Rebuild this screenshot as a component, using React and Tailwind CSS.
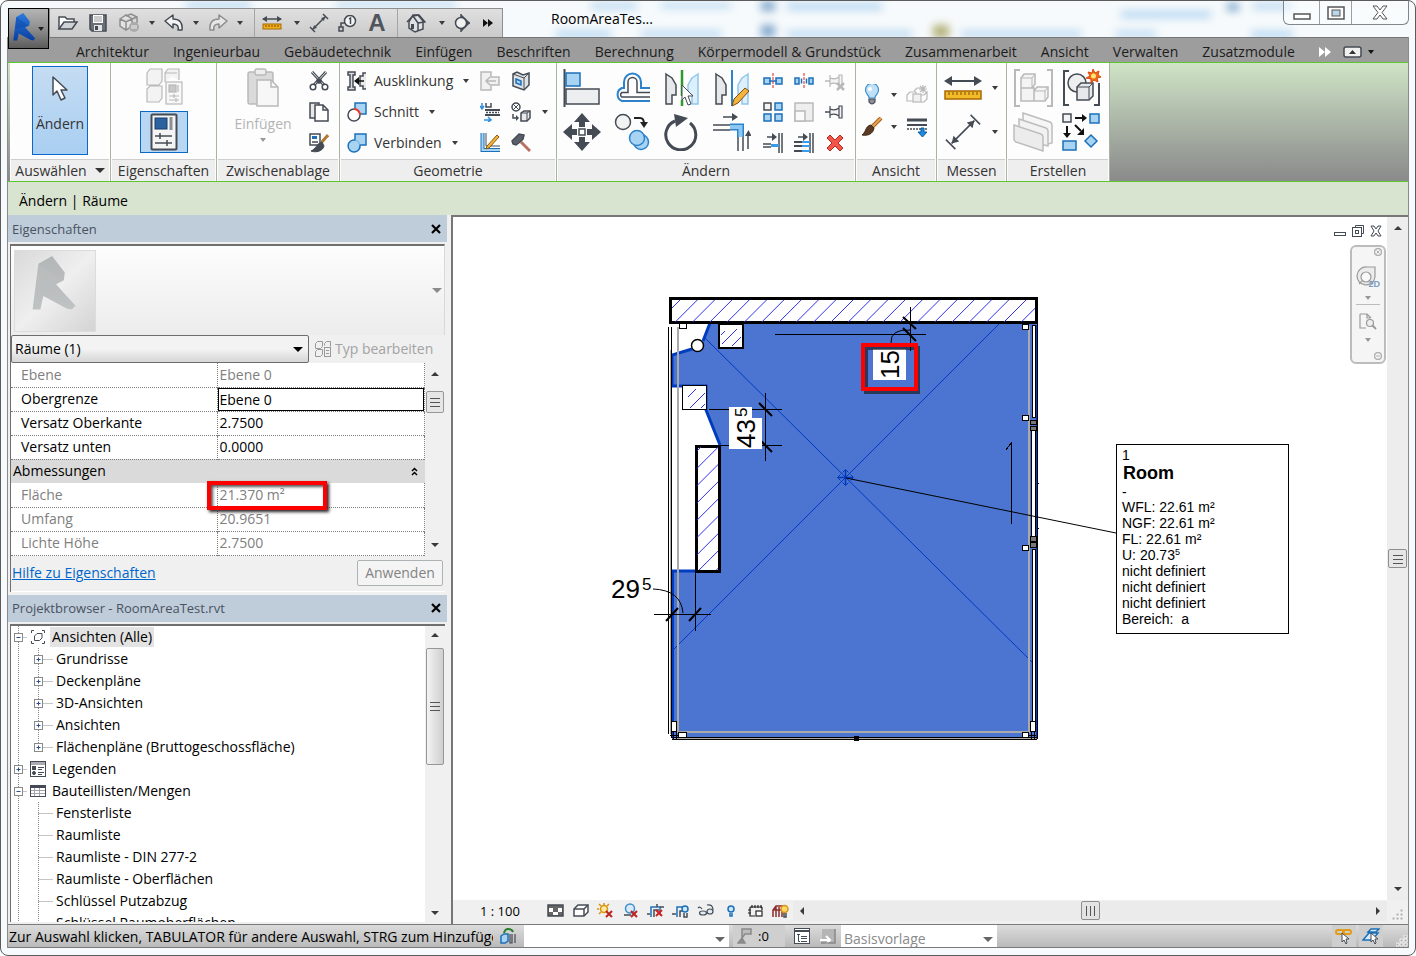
import { useState } from 'react';

const TABS = [
  'Architektur', 'Ingenieurbau', 'Gebäudetechnik', 'Einfügen', 'Beschriften', 'Berechnung',
  'Körpermodell & Grundstück', 'Zusammenarbeit', 'Ansicht', 'Verwalten', 'Zusatzmodule',
];

const PROPERTIES = [
  { name: 'Ebene', value: 'Ebene 0', readOnly: true },
  { name: 'Obergrenze', value: 'Ebene 0', active: true },
  { name: 'Versatz Oberkante', value: '2.7500' },
  { name: 'Versatz unten', value: '0.0000' },
  { group: 'Abmessungen' },
  { name: 'Fläche', value: '21.370 m²', readOnly: true },
  { name: 'Umfang', value: '20.9651', readOnly: true },
  { name: 'Lichte Höhe', value: '2.7500', readOnly: true },
];

const TREE = [
  { level: 0, label: 'Ansichten (Alle)', box: 'minus', icon: 'views', selected: true },
  { level: 1, label: 'Grundrisse', box: 'plus' },
  { level: 1, label: 'Deckenpläne', box: 'plus' },
  { level: 1, label: '3D-Ansichten', box: 'plus' },
  { level: 1, label: 'Ansichten', box: 'plus' },
  { level: 1, label: 'Flächenpläne (Bruttogeschossfläche)', box: 'plus', last: true },
  { level: 0, label: 'Legenden', box: 'plus', icon: 'legend' },
  { level: 0, label: 'Bauteillisten/Mengen', box: 'minus', icon: 'schedule' },
  { level: 1, label: 'Fensterliste' },
  { level: 1, label: 'Raumliste' },
  { level: 1, label: 'Raumliste - DIN 277-2' },
  { level: 1, label: 'Raumliste - Oberflächen' },
  { level: 1, label: 'Schlüssel Putzabzug' },
  { level: 1, label: 'Schlüssel Raumoberflächen' },
];

const D = '#454b54';
const B = '#1c70b8';
const LB = '#a9d3f2';
const G = '#b9b9b9';

const Ico = ({ w = 20, h = 20, c = D, sw = 1.5, children }) => (
  <svg width={w} height={h} viewBox={`0 0 ${w} ${h}`} fill="none" stroke={c} strokeWidth={sw} className="block shrink-0" aria-hidden="true">
    {children}
  </svg>
);

const Caret = ({ c = '#3c3c3c', big }) => (
  <Ico w={big ? 10 : 6} h={big ? 5 : 4}>
    <path d={big ? 'M0 0H10L5 5Z' : 'M0 0H6L3 4Z'} fill={c} stroke="none" />
  </Ico>
);

/* ---------- quick access icons ---------- */
const OpenIcon = () => (
  <Ico w={22} h={16}><path d="M2 14V2h6l2 2h7v3" fill="#fff" /><path d="M2 14 7 7h13l-5 7Z" fill="#cfd3d8" /></Ico>
);
const SaveIcon = () => (
  <Ico w={18} h={18}><path d="M1 1h16v16H3l-2-2Z" fill="#6a6f77" /><rect x="4" y="1" width="10" height="8" fill="#fff" stroke="none" /><path d="M5 3h8M5 5h8M5 7h8" stroke="#999" strokeWidth="1" /><rect x="5" y="11" width="8" height="6" fill="#e4e4e4" stroke="none" /><rect x="6" y="12" width="3" height="4" fill={D} stroke="none" /></Ico>
);
const SyncIcon = () => (
  <Ico w={21} h={20} c="#8e8e8e"><path d="M1 6l6-4 6 4v7l-6 4-6-4ZM1 6l6 3 6-3M7 9v8" fill="#e3e3e3" /><path d="M7 3l5-2 6 3v6M13 6l5-2" /><circle cx="15" cy="14" r="5" fill="#aaa" stroke="none" /><path d="M12 13h6M12 15h6" stroke="#eee" strokeWidth="1" /></Ico>
);
const UndoIcon = () => (
  <Ico w={20} h={18}><path d="M1 7 9 1v4c6 0 10 3 9 11h-4c1-4-1-6-5-6v4Z" fill="#f3f3f3" strokeLinejoin="round" /></Ico>
);
const RedoIcon = () => (
  <Ico w={20} h={18} c="#8c8c8c"><path d="M19 7 11 1v4C5 5 1 8 2 16h4c-1-4 1-6 5-6v4Z" fill="#e6e6e6" strokeLinejoin="round" /></Ico>
);
const RulerIcon = () => (
  <Ico w={20} h={14}><path d="M1 3h18" /><path d="M0 3l5-3v6ZM20 3l-5-3v6Z" fill={D} stroke="none" /><rect x="1" y="8" width="18" height="5" fill="#f0ad1d" stroke="#a86a00" strokeWidth="1" /><path d="M4 9v2M7 9v2M10 9v2M13 9v2M16 9v2" stroke="#7a4d00" strokeWidth="1" /></Ico>
);
const DimIcon = ({ s = 20 }) => (
  <svg width={s} height={s} viewBox="0 0 20 20" fill="none" stroke={D} strokeWidth={s > 30 ? 0.8 : 1.5} className="block shrink-0" aria-hidden="true">
    <path d="M4 16 16 4M14 1l5 5M1 14l5 5" /><path d="M16 4 15 8l-3-3ZM4 16l1-4 3 3Z" fill={D} stroke="none" />
  </svg>
);
const TagIcon = () => (
  <Ico w={19} h={17}><circle cx="12" cy="6" r="5.500" fill="#f5f5f5" /><path d="M11 4l1.500-1v6" /><path d="M7 8H3v4" /><rect x="1" y="12" width="4" height="4" /></Ico>
);
const HouseIcon = () => (
  <Ico w={20} h={19}><path d="M3 8v6l6 4 8-3V7l-5-6H7Z" fill="#dfe1e4" /><path d="M1 8 7 2l5 7M7 2l6-1 6 7-7 1v8" /><rect x="5" y="10" width="3" height="5" fill={D} stroke="none" /></Ico>
);
const SectionIcon = () => (
  <Ico w={18} h={18}><path d="M9 2 16 9 9 16Z" fill={D} /><circle cx="8" cy="9" r="5.500" fill="#f1f1f1" /><path d="M8 0v4M8 14v4M14 9h3" /></Ico>
);

/* ---------- ribbon icons ---------- */
const CursorIcon = () => (
  <Ico w={20} h={27}><path d="M3 2v18l4-4 4 9 4-2-4-8h6Z" fill="#fff" strokeLinejoin="round" /></Ico>
);
const TypesIcon = () => (
  <Ico w={38} h={38} c={G} sw={1.2}><path d="M2 5l3-4h12v12l-3 4H2ZM20 5l3-4h11v11M20 14V5h12M2 21l3-3h12v12l-3 4H2Z" fill="#f3f3f3" /><rect x="21" y="14" width="16" height="22" fill="#f8f8f8" /><rect x="24" y="17" width="7" height="7" fill="#c8c8c8" /><path d="M33 17v7M24 28h10M24 32h10M29 26v4M31 30v4" /></Ico>
);
const PaletteIcon = () => (
  <Ico w={28} h={38} sw={2}><rect x="1.500" y="1.500" width="25" height="35" rx="1" fill="#f4f4f4" /><rect x="5" y="5" width="12" height="11" fill="#2a62a0" stroke="#143c6c" strokeWidth="1" /><path d="M21 4v13" stroke="#8a8f96" strokeWidth="3" /><path d="M5 23h17M5 30h17M10 20v6M17 27v6" strokeWidth="1.500" /></Ico>
);
const PasteIcon = () => (
  <Ico w={34} h={40} c={G}><rect x="2" y="4" width="25" height="32" rx="2" fill="#dadada" /><rect x="9" y="1" width="11" height="6" rx="2" fill="#eee" /><path d="M11 12h14l7 7v19H11Z" fill="#f7f7f7" /><path d="M25 12v7h7" /></Ico>
);
const CutIcon = () => (
  <Ico w={20} h={20}><path d="M3 1 15 14M17 1 5 14" strokeWidth="3" /><path d="M3 1 15 14M17 1 5 14" stroke="#e3e5e8" strokeWidth="1" /><circle cx="4" cy="16" r="2.800" fill="#fff" /><circle cx="16" cy="16" r="2.800" fill="#fff" /><circle cx="10" cy="10" r="2" fill={D} /></Ico>
);
const CopyPagesIcon = () => (
  <Ico w={20} h={20}><path d="M1 1h9v15H1Z" fill="#e8e8e8" /><path d="M6 3h8l5 5v11H6Z" fill="#fff" /><path d="M14 3v5h5" /></Ico>
);
const MatchIcon = () => (
  <Ico w={20} h={20}><rect x="1" y="1" width="10" height="11" fill="#fff" /><rect x="3" y="3" width="5" height="3" fill={B} stroke="none" /><path d="M3 9h6" /><path d="m19 2-7 8" stroke="#b07a34" strokeWidth="3" /><path d="M13 9c-5 1-6 7-11 9 5 2 12 0 13-5Z" fill={D} strokeWidth="1" /></Ico>
);
const CopeIcon = () => (
  <Ico w={20} h={20}><path d="M1 1h7v3H6v12h2v3H1v-3h2V4H1Z" fill="#d8dadd" /><path d="M19 2h-3v3h-3v10h3v3h3" fill="#e9eaec" /><path d="M8 10h9" stroke="#111" /><path d="m12 6-5 4 5 4Z" fill="#111" stroke="none" /></Ico>
);
const CutGeoIcon = () => (
  <Ico w={20} h={20}><path d="M8 1h11v11H8Z" fill={LB} stroke={B} /><circle cx="7" cy="13" r="6" fill="#fff" /><path d="M7 7a6 6 0 0 1 6 6" stroke="#f03c2e" strokeWidth="2" /></Ico>
);
const JoinIcon = () => (
  <Ico w={20} h={20} c={B}><path d="M8 1h11v11h-6a6 6 0 1 1-5-5Z" fill={LB} /><path d="M8 7a6 6 0 0 1 5 5" stroke="#6fb2e6" strokeWidth="1" /></Ico>
);
const WallJoinIcon = () => (
  <Ico w={20} h={20} c={G}><path d="M1 1h10v5h8v8h-8v5H1Z" fill="#f1f1f1" /><path d="M16 10H6M10 6l-4 4 4 4" /></Ico>
);
const SplitFaceIcon = () => (
  <Ico w={20} h={20}><path d="M2 3l4-2 6 3 6-2v12l-5 5-11-4Z" fill="#dfe2e6" /><path d="M2 3l11 4 5-5M13 7v12" strokeWidth="1" /><path d="M5 8l5 2v4l-5-2Z" fill={LB} stroke={B} /></Ico>
);
const BeamIcon = () => (
  <Ico w={20} h={20}><path d="M2 1v6M0 4l2 3 2-3M4 18h7M8 15l3 3-3 2" stroke="#2f90e0" /><path d="M6 1v4h5V1" /><path d="M5 8h15M5 13h15" strokeWidth="2" /><path d="M6 10.500h13" strokeDasharray="2 1" /></Ico>
);
const DemoIcon = () => (
  <Ico w={20} h={20}><circle cx="5" cy="5" r="4" /><path d="M2 2l6 6M8 2 2 8" strokeWidth="1" /><path d="M2 12v4h4" /><path d="M5 13l3 3-3 3Z" fill={D} stroke="none" /><path d="M10 11l3-2h6v7l-3 3h-6Z" fill="#e8eaed" /><path d="M10 11h6l3-2M16 11v8" strokeWidth="1" /></Ico>
);
const PencilWallIcon = () => (
  <Ico w={20} h={20}><path d="M2.500 0v17H20" strokeWidth="4" stroke={B} /><path d="M2.500 0v17H20" strokeWidth="2" stroke="#a9d3f2" /><path d="M6 0v13h14" stroke={D} strokeWidth="1" /><path d="M7 13 17 2l2 2L9 15l-3 1Z" fill="#f3b33d" stroke="#8a5a0e" strokeWidth="1" /></Ico>
);
const HammerIcon = () => (
  <Ico w={20} h={20}><path d="m10 9 9 9" stroke="#b96f61" strokeWidth="3" /><path d="M1 8 8 1l5 1-1 4-3 3-4 3-3-1Z" fill="#5c6169" /></Ico>
);
const AlignIcon = () => (
  <Ico w={38} h={38}><path d="M1.500 0v38" strokeWidth="2" /><rect x="3" y="4" width="14" height="13" fill={LB} stroke={B} /><rect x="3" y="20" width="33" height="15" fill="#eceef0" /></Ico>
);
const OffsetIcon = () => (
  <Ico w={38} h={34}><path d="M37 17H28V11a8.500 8.500 0 0 0-17 0v6H9a7 7 0 0 0 0 13H37" stroke="#2c83cc" strokeWidth="2" /><path d="M37 21.500H24V11a4.500 4.500 0 0 0-9 0v10.500H9a2.500 2.500 0 0 0 0 4.500H37" /></Ico>
);
const MirrorHalves = () => (
  <>
    <path d="M2 5l6 4 4 7v10H8v9H2Z" fill="#e6e8ea" />
    <path d="M34 5l-6 4-4 7v10h4v9h6Z" fill="#dceffb" stroke="#8fc6ea" />
  </>
);
const MirrorPickIcon = () => (
  <Ico w={36} h={38}><MirrorHalves /><path d="M18 1v36" stroke="#2e9a2b" strokeWidth="2.500" strokeDasharray="26 4" /><path d="M18 16v15l3-3 3 8 3-1-3-8h5Z" fill="#fff" strokeWidth="1" /></Ico>
);
const MirrorDrawIcon = () => (
  <Ico w={36} h={38}><MirrorHalves /><path d="M18 1v36" stroke="#2c83cc" strokeWidth="2" /><path d="m18 37 2-7 11-11 4 3-11 12Z" fill="#f3b33d" stroke="#7a4e10" strokeWidth="1" /></Ico>
);
const MoveIcon = () => (
  <Ico w={38} h={38}><path d="M19 0l8 9h-5v5h-6V9h-5ZM19 38l-8-9h5v-5h6v5h5ZM0 19l9-8v5h5v6H9v5ZM38 19l-9 8v-5h-5v-6h5v-5Z" fill={D} stroke="none" /><rect x="16" y="16" width="6" height="6" fill="#fff" /></Ico>
);
const CopyIcon = () => (
  <Ico w={36} h={38}><circle cx="9" cy="9" r="7.500" fill="#f2f2f2" /><path d="M20 5h6q4 0 4 6" stroke="#222" strokeWidth="2" /><path d="M26 9h8l-4 6Z" fill="#222" stroke="none" /><circle cx="27" cy="29" r="7.500" fill={LB} stroke="#2c83cc" /><circle cx="23" cy="25" r="7.500" fill={LB} stroke="#2c83cc" /></Ico>
);
const RotateIcon = () => (
  <Ico w={36} h={38}><path d="M11 8a15 15 0 1 0 15 2" strokeWidth="3" /><path d="M10 1l14 4-12 9Z" fill={D} stroke="none" /></Ico>
);
const TrimIcon = () => (
  <Ico w={38} h={38}><path d="M10 4h12M0 12h17M0 17h17M25 24v14M30 24v14" /><path d="M19 0l6 4-6 4ZM32 23l3.500-6 3 6Z" fill={D} stroke="none" /><path d="M17 14h10.500v10" stroke="#2c83cc" strokeWidth="7" /><path d="M17 14h10.500v10" stroke="#8cc8f2" strokeWidth="4" /><path d="M35 36V22" /></Ico>
);
const SplitIcon = ({ gap }) => (
  <Ico w={20} h={16} c={B}><rect x="1" y="5" width={gap ? 4 : 6} height="6" fill={LB} /><rect x={gap ? 15 : 13} y="5" width={gap ? 4 : 6} height="6" fill={LB} />{gap ? <path d="M7.500 5.500v5M12.500 5.500v5" /> : <path d="M6 8h8" />}<path d="M10 0v16" stroke="#d22" strokeDasharray="3 1" strokeWidth="1" /></Ico>
);
const ArrayIcon = () => (
  <Ico w={20} h={20} c={B}><rect x="1" y="1" width="7" height="7" fill="#f3f3f3" stroke={D} /><rect x="12" y="1" width="7" height="7" fill={LB} /><rect x="1" y="12" width="7" height="7" fill={LB} /><rect x="12" y="12" width="7" height="7" fill={LB} /></Ico>
);
const ScaleIcon = () => (
  <Ico w={20} h={20} c={G}><rect x="1" y="1" width="18" height="18" fill="#eee" /><rect x="1" y="9" width="10" height="10" fill="#fafafa" /></Ico>
);
const PinIcon = ({ c = D, off }) => (
  <Ico w={20} h={20} c={c}><path d="M0 10h5" /><path d="M5 4v12M5 7q5 2 9-1v8q-4-3-9-1M14 4h3v12h-3Z" fill="#f4f4f4" strokeWidth="1.200" />{off && <path d="m12 12 7 7M19 12l-7 7" strokeWidth="2.500" />}</Ico>
);
const ExtendIcon = ({ multi }) => (
  <Ico w={20} h={20}><path d="M4 4h7" /><path d="M9 0l5 4-5 4Z" fill={D} stroke="none" /><path d="M16 0v20M19 0v20" />{multi ? <><path d="M0 9h8M0 13h8M0 18h8" strokeWidth="2" /><path d="M8 9h8M8 13h8M8 18h8" stroke="#3c9be6" strokeWidth="2" /></> : <><path d="M0 11h8M0 14h8" /><path d="M8 12.500h8" stroke="#3c9be6" strokeWidth="3" /></>}</Ico>
);
const DeleteIcon = () => (
  <Ico w={18} h={18}><path d="M1 4l3-3 5 5 5-5 3 3-5 5 5 5-3 3-5-5-5 5-3-3 5-5Z" fill="#f0564a" stroke="#b8281e" strokeWidth="1" /></Ico>
);
const BulbIcon = () => (
  <Ico w={16} h={22} c="#3f8fcc" sw={1.2}><path d="M5 14q0-2-2-4a6.500 6.500 0 1 1 10 0q-2 2-2 4Z" fill="#bfe0f7" /><circle cx="6" cy="5" r="2" fill="#fff" stroke="none" /><path d="M5 15h6v3q-3 4-6 0Z" fill="#8b8f95" stroke={D} /></Ico>
);
const BoxesIcon = () => (
  <Ico w={22} h={20} c={G} sw={1.2}><path d="M1 10l3-3h6v9H1ZM8 6l3-3h5M13 10h5l3-3v7l-3 3h-3" /><rect x="7" y="9" width="8" height="8" fill="#f1f1f1" /><path d="M17 0v8M13 4h8M14 1l6 6M20 1l-6 6" /></Ico>
);
const BrushIcon = () => (
  <Ico w={21} h={20}><path d="M19 1 9 11" stroke="#a25e1d" strokeWidth="4" /><path d="M19 1 9 11" stroke="#eba550" strokeWidth="2" /><path d="M9 8c-6 1-4 6-9 10 6 1 11-1 12-7Z" fill="#5a3a22" stroke="#3d2817" strokeWidth="1" /></Ico>
);
const LineworkIcon = () => (
  <Ico w={20} h={20}><path d="M0 3h20" strokeWidth="3" /><path d="M0 8h20" strokeWidth="2" /><path d="M0 12h20" strokeDasharray="2 1" /><path d="M14 11h3v4h3l-4.500 5-4.500-5h3Z" fill="#1d8ae0" stroke="#0d5ca0" strokeWidth="1" /></Ico>
);
const MeasureIcon = () => (
  <Ico w={38} h={24}><path d="M4 5h30" strokeWidth="2" /><path d="M0 5l8-5v10ZM38 5l-8-5v10Z" fill={D} stroke="none" /><rect x="1" y="15" width="36" height="8" fill="#f3bb2a" stroke="#a86a00" /><path d="M5 16v3M9 16v3M13 16v3M17 16v3M21 16v3M25 16v3M29 16v3M33 16v3" stroke="#7a4d00" strokeWidth="1" /></Ico>
);
const GroupIcon = () => (
  <Ico w={39} h={38} c={G}><path d="M6 1H1v36h5M33 1h5v36h-5" strokeWidth="2" /><path d="M7 9l3-4h11v10l-3 4H7ZM7 19h13v13H7ZM20 22l3-4h11v10l-3 4H20Z" fill="#f4f4f4" /><path d="M7 9h11v10M18 9l3-4M20 22h11v10M31 22l3-4" strokeWidth="1" /></Ico>
);
const CreateGroupIcon = () => (
  <Ico w={39} h={38}><path d="M7 2H2v34h5M32 36h5V14" strokeWidth="2" /><circle cx="15" cy="14" r="9" fill="#eceef0" /><path d="M15 18l4-4h12v13l-4 4H15Z" fill="#e6e8eb" /><path d="M15 18h12v12M27 18l4-4" strokeWidth="1" /><path d="M31 0l2 4 4-2-1 4 3 2-4 1 1 4-4-2-3 3v-4l-5-1 4-2-2-4 4 1Z" fill="#f26a1b" stroke="#d84708" strokeWidth="1" /><circle cx="31.500" cy="7" r="2.500" fill="#ffe873" stroke="none" /></Ico>
);
const AssemblyIcon = () => (
  <Ico w={40} h={40} c="#bdbdbd"><path d="M10 1l27 9q2 1 2 3v18l-4 1L10 20Z" fill="#f6f6f6" /><path d="M6 7l27 9q2 1 2 3v15L6 26Z" fill="#f2f2f2" /><path d="M1 13l27 9q2 1 2 3v14L3 30q-2-1-2-3Z" fill="#ececec" /></Ico>
);
const SimilarIcon = () => (
  <Ico w={39} h={38}><rect x="1" y="1" width="8" height="8" fill="#f3f3f3" /><rect x="28" y="1" width="9" height="9" fill={LB} stroke={B} /><rect x="1" y="28" width="13" height="9" fill={LB} stroke={B} /><path d="m29 22 6 6-6 6-6-6Z" fill={LB} stroke={B} /><path d="M13 5h9M5 13v8M13 12l6 6" stroke="#111" strokeWidth="2" /><path d="M20 1l5 4-5 4ZM1 20l4 5 4-5ZM22 15v7h-7Z" fill="#111" stroke="none" /></Ico>
);

/* ---------- view and status bar icons ---------- */
const ViewIcons = [
  ['Detaillierungsgrad', <Ico w={17} h={13}><rect x="1" y="1" width="15" height="11" fill="#666" /><path d="M2 4h4v4H2ZM11 4h4v4h-4ZM6 8h5v3H6Z" fill="#fff" stroke="none" /></Ico>],
  ['Bildstil', <Ico w={16} h={13}><path d="M1 5l4-4h10v7l-4 4H1Z" fill="#fff" /><path d="M1 5h10v7M11 5l4-4" /></Ico>],
  ['Sonnenbahn', <Ico w={17} h={15}><circle cx="7" cy="6" r="3.500" fill="#ffe9a0" stroke="#d89415" /><path d="M7 0v2M0 6h2M2 1l2 2M12 1l-2 2M2 11l2-2" stroke="#d89415" /><path d="m9 8 6 6M15 8l-6 6" stroke="#b22" strokeWidth="2" /></Ico>],
  ['Schatten', <Ico w={16} h={15}><circle cx="7" cy="5.500" r="4.500" fill="#d6eafa" stroke="#3f8fcc" /><path d="M1 12h7" /><path d="m8 8 6 6M14 8l-6 6" stroke="#b22" strokeWidth="2" /></Ico>],
  ['Ansicht zuschneiden', <Ico w={17} h={14}><path d="M4 13V3h9v8" stroke={B} strokeWidth="1.500" /><path d="M0 10h3M7 13V6h5M13 3h4M10 0v3" stroke={D} /><path d="m9 6 6 6M15 6l-6 6" stroke="#c22" strokeWidth="2" /></Ico>],
  ['Zuschneidebereich', <Ico w={17} h={14}><path d="M5 13V3h7" stroke={B} /><path d="M0 10h4M8 13V7h3" stroke={D} /><circle cx="13" cy="5" r="3" fill="#cde6f8" stroke={B} /><path d="M12 9v4h3V9" /></Ico>],
  ['Temporär ausblenden', <Ico w={18} h={13} sw={1.2}><path d="M1 4q2-2 4 1M10 1q6-1 6 5" /><ellipse cx="6" cy="9" rx="3.500" ry="2" fill="#dfeaf2" /><ellipse cx="13" cy="7.500" rx="3" ry="2.500" fill="#dfeaf2" /></Ico>],
  ['Verdeckte Elemente', <Ico w={8} h={12} c={B}><circle cx="4" cy="4" r="3" fill="#cde6f8" /><path d="M3 8v3h2V8" /></Ico>],
  ['Eigenschaften der Ansicht', <Ico w={16} h={14}><path d="M2 3h12M2 3v9h5M14 3v3M4 1v3M7 1v3M10 1v3M13 1v3M0 6h3M0 9h3" stroke="#222" strokeWidth="1.200" /><rect x="8" y="7" width="6" height="5" fill="#fff" stroke="#222" strokeWidth="1.200" /></Ico>],
  ['Berechnungsmodell', <Ico w={17} h={14}><path d="M1 13V6l3-4h8M1 6h9M4 3v10M7 3v10M10 3v10" stroke="#8b2d2d" /><circle cx="12.500" cy="5" r="3.500" fill="#ffd768" stroke="#d89415" /><path d="M12 9v4h2V9" /></Ico>],
];

const RLogo = ({ id, a, b }) => (
  <g>
    <defs>
      <linearGradient id={id} x1="0" y1="0" x2="0" y2="1"><stop offset="0" stopColor={a} /><stop offset="1" stopColor={b} /></linearGradient>
    </defs>
    <path d="M6 8 20 0l13 17-1 8-8 4 20 22-4 4-5-1L11 41 8 55H0Z" fill={`url(#${id})`} />
    <path d="M6 8 4 32l12-3 14-4" fill={b} opacity="0.350" />
  </g>
);

const SplitCaret = ({ label }) => (
  <button type="button" aria-label={label} className="flex h-6 w-4 items-center justify-center"><Caret /></button>
);
const Tool = ({ label, className = '', children }) => (
  <button type="button" aria-label={label} title={label} className={`flex items-center justify-center ${className}`}>{children}</button>
);

function TitleBar() {
  return (
    <header className="relative flex h-9 shrink-0 items-start pl-px">
      <div className="flex h-9 pt-[7px]">
        <button type="button" aria-label="Anwendungsmenü" className="relative z-10 flex h-[41px] w-[41px] shrink-0 items-start justify-between border border-black bg-linear-to-b from-[#b5b5b5] via-[#8f8f8f] to-[#5c5c5c] px-1 pt-1">
          <svg width="23" height="28" viewBox="0 0 45 56" aria-hidden="true"><RLogo id="r-blue" a="#2b7be0" b="#0a3fa0" /></svg>
          <span className="pt-3.5"><Caret c="#222" /></span>
        </button>
        <div className="flex h-[30px] items-center border border-[#8e8e8e] bg-linear-to-b from-[#e0e0e0] to-[#cacaca] pl-1">
          <Tool label="Öffnen" className="w-7"><OpenIcon /></Tool>
          <Tool label="Speichern" className="w-8"><SaveIcon /></Tool>
          <Tool label="Synchronisieren" className="w-[30px]"><SyncIcon /></Tool>
          <SplitCaret label="Synchronisieren Optionen" />
          <Tool label="Rückgängig" className="w-7"><UndoIcon /></Tool>
          <SplitCaret label="Rückgängig Liste" />
          <Tool label="Wiederherstellen" className="w-7"><RedoIcon /></Tool>
          <SplitCaret label="Wiederherstellen Liste" />
          <span className="ml-1.5 h-full w-px bg-[#a5a5a5]" />
          <Tool label="Messen" className="w-[34px]"><RulerIcon /></Tool>
          <SplitCaret label="Messen Optionen" />
          <Tool label="Ausgerichtete Bemaßung" className="w-7"><DimIcon /></Tool>
          <Tool label="Nach Kategorie beschriften" className="w-7"><TagIcon /></Tool>
          <button type="button" className="w-8 font-['Liberation_Sans',sans-serif] text-2xl/6 font-bold text-[#50555d]">A</button>
          <span className="ml-1 h-full w-px bg-[#a5a5a5]" />
          <Tool label="3D-Ansicht" className="w-9"><HouseIcon /></Tool>
          <SplitCaret label="3D-Ansicht Optionen" />
          <Tool label="Schnitt" className="w-6"><SectionIcon /></Tool>
          <Tool label="Mehr" className="w-7"><Ico w={10} h={8}><path d="M0 0l5 4-5 4ZM5 0l5 4-5 4Z" fill="#111" stroke="none" /></Ico></Tool>
        </div>
      </div>
      <h1 className="pt-2 pl-12 text-sm/5 text-black">RoomAreaTes...</h1>
      <div className="ml-auto flex h-6 rounded-b-md border border-t-0 border-[#7f868c] bg-white/40">
        <Tool label="Minimieren" className="w-9 border-r border-[#9aa0a6]"><Ico w={18} h={16}><rect x="1" y="9" width="16" height="5" fill="#fff" stroke="#555" /></Ico></Tool>
        <Tool label="Maximieren" className="w-8 border-r border-[#9aa0a6]"><Ico w={18} h={16}><rect x="1" y="2" width="16" height="12" fill="#fff" stroke="#555" /><rect x="5" y="5" width="8" height="6" fill="#bcd6ea" stroke="#555" strokeWidth="1" /></Ico></Tool>
        <Tool label="Schließen" className="w-14"><Ico w={16} h={15}><path d="M1 1h4l3 4 3-4h4l-5 6.500 5 6.500h-4l-3-4-3 4H1l5-6.500Z" fill="#fff" stroke="#555" strokeWidth="1" /></Ico></Tool>
      </div>
    </header>
  );
}

function RibbonPanel({ title, caret, className, children }) {
  return (
    <section className={`flex shrink-0 flex-col border-r border-[#a9b5a3] bg-[#fdfdfd] ${className}`}>
      <div className="flex h-24 items-start">{children}</div>
      <h2 className="mx-px flex h-[22px] items-center justify-center gap-2 border-t border-[#cfcfcf] bg-[#eeeeee] text-sm/5 text-[#333]">
        {title}{caret && <Caret big c="#333" />}
      </h2>
    </section>
  );
}

const GeoRow = ({ icon, label }) => (
  <button type="button" className="flex h-[31px] items-center text-sm/5 text-[#333]">
    {icon}<span className="pl-[7px]">{label}</span><span className="pl-2.5"><Caret /></span>
  </button>
);

function Ribbon() {
  return (
    <div className="flex h-[120px] shrink-0 border-y border-[#5cc72e] bg-linear-to-b from-[#cfe4c6] to-[#8a8a8a] pl-0.5">
      <RibbonPanel title="Auswählen" caret className="w-[101px]">
        <button type="button" className="mt-[3px] ml-[22px] flex h-[89px] w-14 flex-col items-center border border-[#0a68cb] bg-linear-to-b from-[#c5dcf2] to-[#a9cff2] pt-2 text-sm/5 text-[#333]">
          <CursorIcon /><span className="pt-3">Ändern</span>
        </button>
      </RibbonPanel>
      <RibbonPanel title="Eigenschaften" className="w-[106px]">
        <div className="flex w-full flex-col items-center gap-1 pt-1">
          <Tool label="Typeneigenschaften" className="h-10"><TypesIcon /></Tool>
          <Tool label="Eigenschaften" className="h-[42px] w-12 border border-[#0a68cb] bg-[#b9d7f3]"><PaletteIcon /></Tool>
        </div>
      </RibbonPanel>
      <RibbonPanel title="Zwischenablage" className="w-[123px]">
        <button type="button" disabled className="flex w-[92px] flex-col items-center pt-[5px] text-sm/5 text-[#b4b4b4]">
          <PasteIcon /><span className="pt-1.5 pb-1">Einfügen</span><Caret c="#999" />
        </button>
        <div className="grid auto-rows-[31px] pt-0.5">
          <Tool label="Ausschneiden"><CutIcon /></Tool>
          <Tool label="Kopieren"><CopyPagesIcon /></Tool>
          <Tool label="Typ anpassen"><MatchIcon /></Tool>
        </div>
      </RibbonPanel>
      <RibbonPanel title="Geometrie" className="w-[217px]">
        <div className="flex w-[140px] flex-col items-start pt-0.5 pl-[7px]">
          <GeoRow icon={<CopeIcon />} label="Ausklinkung" />
          <GeoRow icon={<CutGeoIcon />} label="Schnitt" />
          <GeoRow icon={<JoinIcon />} label="Verbinden" />
        </div>
        <div className="grid auto-rows-[31px] grid-cols-[20px_20px_6px] gap-x-[11px] pt-0.5">
          <Tool label="Dachverbindung"><WallJoinIcon /></Tool>
          <Tool label="Fläche trennen"><SplitFaceIcon /></Tool>
          <span />
          <Tool label="Trägerverbindungen"><BeamIcon /></Tool>
          <Tool label="Abbruch"><DemoIcon /></Tool>
          <Tool label="Mehr Geometrie"><Caret /></Tool>
          <Tool label="Wandverbindungen"><PencilWallIcon /></Tool>
          <Tool label="Hammer"><HammerIcon /></Tool>
        </div>
      </RibbonPanel>
      <RibbonPanel title="Ändern" className="w-[299px]">
        <div className="grid auto-rows-[44px] grid-cols-[50px_50px_50px_50px] pt-[3px]">
          <Tool label="Ausrichten"><AlignIcon /></Tool>
          <Tool label="Versatz"><OffsetIcon /></Tool>
          <Tool label="Spiegeln - Achse wählen"><MirrorPickIcon /></Tool>
          <Tool label="Spiegeln - Achse zeichnen"><MirrorDrawIcon /></Tool>
          <Tool label="Verschieben"><MoveIcon /></Tool>
          <Tool label="Kopieren"><CopyIcon /></Tool>
          <Tool label="Drehen"><RotateIcon /></Tool>
          <Tool label="Stutzen"><TrimIcon /></Tool>
        </div>
        <div className="grid auto-rows-[31px] grid-cols-[31px_31px_31px] pt-0.5">
          <Tool label="Element teilen"><SplitIcon /></Tool>
          <Tool label="Mit Lücke teilen"><SplitIcon gap /></Tool>
          <Tool label="Lösen"><PinIcon c={G} off /></Tool>
          <Tool label="Reihe"><ArrayIcon /></Tool>
          <Tool label="Maßstab"><ScaleIcon /></Tool>
          <Tool label="Fixieren"><PinIcon /></Tool>
          <Tool label="Dehnen"><ExtendIcon /></Tool>
          <Tool label="Mehrere dehnen"><ExtendIcon multi /></Tool>
          <Tool label="Löschen"><DeleteIcon /></Tool>
        </div>
      </RibbonPanel>
      <RibbonPanel title="Ansicht" className="w-[81px]">
        <div className="grid auto-rows-[32px] grid-cols-[32px_12px_34px] pt-4">
          <Tool label="Ausblenden"><BulbIcon /></Tool>
          <Tool label="Ausblenden Optionen"><Caret /></Tool>
          <Tool label="Grafik überschreiben"><BoxesIcon /></Tool>
          <Tool label="Pinsel"><BrushIcon /></Tool>
          <Tool label="Pinsel Optionen"><Caret /></Tool>
          <Tool label="Linienbearbeitung"><LineworkIcon /></Tool>
        </div>
      </RibbonPanel>
      <RibbonPanel title="Messen" className="w-[70px]">
        <div className="grid auto-rows-[44px] grid-cols-[52px_12px] pt-[3px]">
          <Tool label="Zwischen zwei Referenzen messen"><MeasureIcon /></Tool>
          <Tool label="Messen Optionen"><Caret /></Tool>
          <Tool label="Bemaßung"><DimIcon s={38} /></Tool>
          <Tool label="Bemaßung Optionen"><Caret /></Tool>
        </div>
      </RibbonPanel>
      <RibbonPanel title="Erstellen" className="w-[103px]">
        <div className="grid auto-rows-[44px] grid-cols-[48px_48px] pt-[3px] pl-0.5">
          <Tool label="Baugruppe"><GroupIcon /></Tool>
          <Tool label="Gruppe erstellen"><CreateGroupIcon /></Tool>
          <Tool label="Teilelemente"><AssemblyIcon /></Tool>
          <Tool label="Ähnliches erstellen"><SimilarIcon /></Tool>
        </div>
      </RibbonPanel>
    </div>
  );
}

const PaletteHeader = ({ title }) => (
  <div className="flex h-[27px] shrink-0 items-center justify-between bg-[#bfcddb] pr-1.5 pl-1">
    <h2 className="text-[13px]/5 text-[#4a5260]">{title}</h2>
    <button type="button" aria-label={`${title} schließen`}><Ico w={10} h={10} c="#000" sw={2.2}><path d="m1 1 8 8M9 1 1 9" /></Ico></button>
  </div>
);

const ScrollArrow = ({ dir }) => {
  const d = { up: 'M0 4 4 0l4 4Z', down: 'M0 0h8L4 4Z', left: 'M4 0v8L0 4Z', right: 'M0 0v8l4-4Z' }[dir];
  const vertical = dir === 'up' || dir === 'down';
  return (
    <button type="button" aria-label={`Bildlauf ${dir}`} className="flex size-[18px] shrink-0 items-center justify-center">
      <Ico w={vertical ? 8 : 4} h={vertical ? 4 : 8}><path d={d} fill="#3a3a3a" stroke="none" /></Ico>
    </button>
  );
};
const Grip = ({ flat }) => (
  <Ico w={10} h={10} c="#555" sw={1}><path d={flat ? 'M1.500 0v10M5.500 0v10M9.500 0v10' : 'M0 1.500h10M0 5.500h10M0 9.500h10'} /></Ico>
);

function Properties() {
  const [bound, setBound] = useState('Ebene 0');
  return (
    <section>
      <PaletteHeader title="Eigenschaften" />
      <div className="mx-0.5 mt-0.5 border-l border-[#6f6f6f]">
        <div className="flex h-[91px] items-center justify-between border-t-2 border-r border-t-[#6f6f6f] border-r-[#d9d9d9] bg-linear-to-b from-[#fdfdfd] to-[#ececec] pr-0.5 pl-[3px]">
          <svg width="82" height="82" viewBox="0 0 82 82" className="border border-[#dcdcdc] bg-linear-to-br from-[#d9d9d9] via-[#efefef] to-[#d4d4d4]" aria-hidden="true">
            <g transform="translate(18 5)"><RLogo id="r-gray" a="#b3b6b6" b="#c0c3c3" /></g>
          </svg>
          <button type="button" aria-label="Typenauswahl"><Caret big c="#8a8a8a" /></button>
        </div>
        <div className="flex h-7 items-center">
          <div className="relative flex w-[298px]">
            <select aria-label="Kategorie" className="h-7 w-full appearance-none rounded-xs border border-[#6d6d6d] bg-linear-to-b from-[#f3f3f3] from-50% to-[#d6d6d6] pl-[3px] text-sm text-black">
              <option>Räume (1)</option>
            </select>
            <span className="pointer-events-none absolute top-3 right-1.5"><Caret big c="#000" /></span>
          </div>
          <button type="button" disabled className="flex items-center gap-1 pl-1.5 text-sm/5 text-[#a3a3a3]">
            <Ico w={16} h={16} c="#999" sw={1}><path d="M.5 2.500 2.500.5h5v5l-2 2h-5ZM9.500 4.500v-2l2-2h4v5M.5 10.500l2-2h5v5l-2 2h-5Z" /><rect x="9.500" y="6.500" width="6" height="9" /><path d="M11 9.500h3M11 12.500h3" /></Ico>
            Typ bearbeiten
          </button>
        </div>
        <div className="relative flex">
          <table className="w-[414px] table-fixed border-collapse bg-white text-sm/5">
            <tbody>
              {PROPERTIES.map(p => p.group ? (
                <tr key={p.group} className="h-6 bg-[#dadada]">
                  <th colSpan={2} scope="rowgroup" className="px-0.5 font-normal">
                    <span className="flex items-center justify-between pr-1 text-black">
                      {p.group}
                      <Ico w={8} h={9} c="#000"><path d="m1 4 2.500-2.500L6 4M1 8l2.500-2.500L6 8" /></Ico>
                    </span>
                  </th>
                </tr>
              ) : (
                <tr key={p.name} className={`h-6 border-b border-dotted border-[#7d7d7d] ${p.readOnly ? 'text-[#808080]' : 'text-black'}`}>
                  <th scope="row" className="w-[206px] border-r border-dotted border-[#7d7d7d] pl-2.5 text-left font-normal">{p.name}</th>
                  <td className="border-r border-dotted border-[#7d7d7d] p-0">
                    {p.active ? (
                      <input aria-label={p.name} value={bound} onChange={e => setBound(e.target.value)} className="block h-[23px] w-full border border-black pl-px outline-none" />
                    ) : <span className="pl-0.5">{p.value}</span>}
                  </td>
                </tr>
              ))}
            </tbody>
          </table>
          <div className="flex flex-1 flex-col items-center justify-between bg-[#f0f0f0] py-0.5">
            <div>
              <ScrollArrow dir="up" />
              <div className="mt-2 flex h-[22px] w-[18px] items-center justify-center rounded-xs border border-[#979797] bg-[#e6e6e6]"><Grip /></div>
            </div>
            <ScrollArrow dir="down" />
          </div>
          <div className="pointer-events-none absolute top-[118px] left-[196px] h-[29px] w-[120px] border-4 border-[#f00] shadow-[2px_2px_3px_#222,inset_2px_2px_3px_#555]" />
        </div>
        <div className="flex h-9 items-center justify-between border-b border-white pr-0.5 pl-px text-sm/5">
          <a href="#hilfe" className="text-[#0066cc] underline">Hilfe zu Eigenschaften</a>
          <button type="button" disabled className="h-[26px] w-[86px] rounded-xs border border-[#adb2b5] bg-[#f4f4f4] text-[#838383]">Anwenden</button>
        </div>
      </div>
    </section>
  );
}

const NodeIcon = ({ name }) => {
  if (name === 'views') return <Ico w={16} h={16} sw={1}><path d="M4 1.500H1.500V4M12 1.500h2.500V4M1.500 12v2.500H4M14.500 12v2.500H12" /><path d="M4.500 7 7 4.500h5V9l-2.500 2.500h-5Z" /></Ico>;
  if (name === 'legend') return <Ico w={16} h={16} sw={1}><rect x=".5" y=".5" width="15" height="15" fill="#fff" /><rect x="1" y="1" width="14" height="3" fill="#a9adb3" stroke="none" /><rect x="2.500" y="5.500" width="3" height="3" fill={D} /><circle cx="4" cy="12" r="1.500" fill={D} /><path d="M8 6.500h6M8 8.500h4M8 11.500h6M8 13.500h4" /></Ico>;
  return <Ico w={16} h={14} sw={1}><rect x=".5" y="1.500" width="15" height="11" fill="#fff" /><path d="M0 3h16" strokeWidth="2" /><path d="M1 6.500h14M1 9.500h14M4.500 4v8M9.500 4v8" stroke="#a1a5ab" /></Ico>;
};

const TreeRow = ({ node }) => {
  const x = node.level ? 27.5 : 7.5;
  const w = node.level ? 45 : 19;
  return (
    <li className="flex h-[22px] items-center">
      <Ico w={w} h={22} c="#8a8a8a" sw={1}>
        <path d="M7.500 0v22" strokeDasharray="1 1" />
        {node.level === 1 && <path d={node.last ? 'M27.500 0v11' : 'M27.500 0v22'} strokeDasharray="1 1" />}
        <path d={`M${x} 11.500H${w - 3}`} strokeDasharray="1 1" />
        {node.box && <>
          <rect x={x - 4} y="7.500" width="8" height="8" fill="#fff" />
          <path d={`M${x - 2} 11.500h4${node.box === 'plus' ? `M${x} 9.500v4` : ''}`} stroke="#2b4e8c" />
        </>}
      </Ico>
      {node.icon && <NodeIcon name={node.icon} />}
      <span className={`text-sm/5 text-black ${node.icon ? 'ml-1 px-0.5' : ''} ${node.selected ? 'bg-[#e3e3e3]' : ''}`}>{node.label}</span>
    </li>
  );
};

function ProjectBrowser() {
  return (
    <section className="mt-[3px] flex min-h-0 flex-1 flex-col pb-0.5">
      <PaletteHeader title="Projektbrowser - RoomAreaTest.rvt" />
      <div className="mx-0.5 mt-0.5 flex min-h-0 flex-1 border-t-2 border-l border-[#6f6f6f] bg-white">
        <ul className="min-h-0 flex-1 overflow-hidden">
          {TREE.map(n => <TreeRow key={`${n.level}${n.label}`} node={n} />)}
        </ul>
        <div className="flex w-5 flex-col items-center justify-between bg-[#f0f0f0]">
          <div>
            <ScrollArrow dir="up" />
            <div className="mt-1 flex h-[117px] w-[18px] items-center justify-center rounded-xs border border-[#979797] bg-linear-to-r from-[#f3f3f3] to-[#cfcfcf]"><Grip /></div>
          </div>
          <ScrollArrow dir="down" />
        </div>
      </div>
    </section>
  );
}

const Knob = ({ x, y, w = 6, h = 5 }) => <rect x={x + 0.5} y={y + 0.5} width={w} height={h} fill="#fff" stroke="#000" />;

function FloorPlan() {
  const tag = ['nicht definiert', 'nicht definiert', 'nicht definiert', 'Bereich:\u00a0 a'];
  return (
    <svg width="933" height="684" viewBox="453 217 933 684" className="block shrink-0 font-['Liberation_Sans',Arial,sans-serif]" fill="none" role="img" aria-label="Grundriss">
      <defs>
        <clipPath id="wall-top"><rect x="672" y="300" width="363" height="22" /></clipPath>
        <clipPath id="wall-left"><rect x="697" y="447" width="21" height="123" /></clipPath>
      </defs>
      <path d="M710 323H1037V739H672V571H720V445L706 409V386H672V355L697 348L704 340Z" fill="#4b75d1" />
      <path d="M704 337 1036 666M999 324 673 650" stroke="#0038c4" />
      <path d="M710 323 703 341M692 349 672 355V386H706V410L720 445M672 571H697" stroke="#003cc0" strokeWidth="3" />
      <g shapeRendering="crispEdges">
        <path d="M672.500 571V738M1036.500 325V738" stroke="#003cc0" strokeWidth="2" />

        {/* left facade */}
        <path d="M668.500 327V734M671.500 327V738" stroke="#000" />
        <path d="M670.500 350V734" stroke="#aaa" />
        <path d="M678 327V732H1029V326" stroke="#aaa" strokeWidth="2" />

        {/* right facade */}
        <rect x="1032.500" y="325.500" width="3" height="92" fill="#fff" stroke="#000" />
        <rect x="1031.500" y="430.500" width="4" height="106" fill="#fff" stroke="#000" />
        <rect x="1032.500" y="549.500" width="3" height="182" fill="#fff" stroke="#000" />
        <path d="M1030 420h6v4h-6ZM1030 426h6v4h-6ZM1030 536h6v5h-6ZM1030 542h6v5h-6Z" fill="#777" stroke="#000" />
        <path d="M1037.500 323V739M672 737.500H1037M672 739.500H1037" stroke="#000" />
        <path d="M674 738.500H1036" stroke="#aaa" />
        <path d="M854 736h4v4h-4ZM1037 483h2M1037 528h2" fill="#000" stroke="#000" />

        {/* walls */}
        <rect x="670.500" y="298.500" width="366" height="24" fill="#fff" stroke="#000" strokeWidth="3" />
        <rect x="696" y="446" width="23" height="125" fill="#fff" stroke="#000" strokeWidth="3" />
        <rect x="719" y="324" width="24" height="24" fill="#fff" stroke="#000" strokeWidth="2" />
        <rect x="682.500" y="385.500" width="24" height="24" fill="#fff" stroke="#000" />
        <Knob x={679} y={323} w={7} /><Knob x={1022} y={324} /><Knob x={1022} y={415} /><Knob x={1022} y={545} />
        <Knob x={671} y={721} w={5} h={10} /><Knob x={678} y={732} w={8} />
        <Knob x={1022} y={732} /><Knob x={1030} y={721} w={5} h={10} />
        <path d="M670 735h9M673 731v8M676 731v8M1028 735h8M1031 731v8M1034 731v8" stroke="#000" />
      </g>
      <g stroke="#3030f0">
        <g clipPath="url(#wall-top)">
          {Array.from({ length: 23 }, (_, i) => <path key={i} d={`M${658 + i * 17.3} 322l22-22`} />)}
        </g>
        <g clipPath="url(#wall-left)">
          {Array.from({ length: 9 }, (_, i) => <path key={i} d={`M696 ${452 + i * 17.3}l24-24`} />)}
        </g>
        <path d="M721 335l4-4M722 344l15-15M732 346l9-9M688 397l8-8M690 408l15-15M701 408l4-4" />
      </g>
      <circle cx="697.500" cy="345.500" r="6" fill="#fff" stroke="#000" strokeWidth="1.500" />

      {/* room centre */}
      <path d="M838 477.500H853M845.500 470V485" stroke="#0038b8" strokeWidth="1.500" />
      <path d="M840.500 474.500l-3 3 3 3M850.500 474.500l3 3-3 3M842.500 472.500l3-3 3 3M842.500 482.500l3 3 3-3" stroke="#0038b8" />
      <path d="M846 478 1116 533" stroke="#000" />
      <path d="M1011.500 524V442.500L1006 450" stroke="#000" shapeRendering="crispEdges" />

      {/* dimensions */}
      <g stroke="#000" shapeRendering="crispEdges">
        <path d="M775 334.500H926M910.500 307V351M709 409.500H782M720 445.500H782M765.500 393V461M654 614.500H711M695.500 572V631" />
      </g>
      <path d="M891 343Q890 329 910 330M653 589Q681 590 683 613" stroke="#000" />
      <path d="M903 317l13 12M903 328l13 13M759 403l13 13M759 439l13 13M666 621l12-13M689 621l12-13" stroke="#000" strokeWidth="2" />
      <path d="M729 407h23v11h10v31h-33ZM873 349h33v31h-33Z" fill="#fff" />
      <g fill="#000" fontSize="26">
        <text x="611" y="598">29</text>
        <text x="642" y="590" fontSize="17">5</text>
        <text transform="translate(755 448) rotate(-90)">43</text>
        <text transform="translate(747 417) rotate(-90)" fontSize="17">5</text>
        <text transform="translate(899 379) rotate(-90)">15</text>
      </g>
      <rect x="866" y="348" width="52" height="44" stroke="#111" strokeOpacity="0.600" strokeWidth="4" />
      <rect x="863" y="345" width="53" height="44" stroke="#f00" strokeWidth="4" />

      {/* room tag */}
      <rect x="1116.500" y="444.500" width="172" height="189" fill="#fff" stroke="#000" shapeRendering="crispEdges" />
      <g fill="#000" fontSize="14">
        <text x="1122" y="460">1</text>
        <text x="1123" y="479" fontSize="18" fontWeight="700">Room</text>
        <text x="1122" y="497">-</text>
        <text x="1122" y="512">WFL: 22.61 m²</text>
        <text x="1122" y="528">NGF: 22.61 m²</text>
        <text x="1122" y="544">FL: 22.61 m²</text>
        <text x="1122" y="560">U: 20.73<tspan dy="-5" fontSize="9">5</tspan></text>
        {tag.map((t, i) => <text key={i} x="1122" y={576 + i * 16}>{t}</text>)}
      </g>
    </svg>
  );
}

const NavBar = () => (
  <div className="absolute top-7 right-px flex h-[119px] w-9 flex-col items-center rounded-md border-2 border-[#bcbcbc] bg-[#f5f5f5]">
    <Tool label="Leiste schließen" className="mr-0.5 self-end pt-px"><Ico w={8} h={8} c="#b0b0b0"><circle cx="4" cy="4" r="3.500" /><path d="m2.500 2.500 3 3M5.500 2.500l-3 3" strokeWidth="1" /></Ico></Tool>
    <button type="button" className="relative mt-2.5">
      <Ico w={24} h={24} c="#9a9a9a" sw={1.2}><path d="M11 1h8v10a9 9 0 1 1-8-10Z" fill="#ececec" /><circle cx="10" cy="11" r="5" fill="#f8f8f8" /><path d="m6 15-3 3M14 15l3 3" /></Ico>
      <span className="absolute right-0 bottom-0 font-['Liberation_Sans',sans-serif] text-[9px]/3 font-bold text-[#7b9cc4]">2D</span>
    </button>
    <span className="pt-1.5"><Caret c="#999" /></span>
    <span className="mt-1 h-px w-6 bg-[#bcbcbc]" />
    <Tool label="Zoom" className="pt-2"><Ico w={18} h={17} c="#9a9a9a" sw={1.2}><path d="M1 1h7l4 4M7 15H1V1M8 1v4h4" /><circle cx="11" cy="10" r="3.500" fill="#eee" /><path d="m13 12 4 4" strokeWidth="2" /></Ico></Tool>
    <span className="pt-2"><Caret c="#999" /></span>
    <Tool label="Leiste anpassen" className="mt-auto mr-0.5 mb-0.5 self-end"><Ico w={8} h={8} c="#b0b0b0"><circle cx="4" cy="4" r="3.500" /><path d="M2 4h4" strokeWidth="1" /></Ico></Tool>
  </div>
);

const ResizeGrip = () => (
  <Ico w={12} h={12}><path d="M8 0h3v3H8ZM4 4h3v3H4ZM8 4h3v3H8ZM0 8h3v3H0ZM4 8h3v3H4ZM8 8h3v3H8Z" fill="#aeaeae" stroke="#f3f3f3" strokeWidth="1" /></Ico>
);

function DrawingView() {
  return (
    <main className="flex min-w-0 flex-1 flex-col border-t-2 border-l-2 border-[#777] bg-[#f0f0f0] pb-[3px]">
      <div className="flex min-h-0 flex-1">
        <div className="relative min-w-0 flex-1 overflow-hidden bg-white">
          <FloorPlan />
          <div className="absolute top-2 right-[5px] flex gap-1.5">
            <Tool label="Ansicht minimieren"><Ico w={12} h={12}><rect x=".5" y="7.500" width="11" height="3" fill="#fff" strokeWidth="1" /></Ico></Tool>
            <Tool label="Ansicht wiederherstellen"><Ico w={12} h={12} sw={1}><path d="M3.500 2.500v-2h8v8h-2" /><rect x=".5" y="2.500" width="9" height="9" fill="#fff" /><rect x="3.500" y="5.500" width="3" height="3" /></Ico></Tool>
            <Tool label="Ansicht schließen"><Ico w={12} h={12} sw={1}><path d="M1 1h3l2 3 2-3h3L8 6l3 5H8L6 8l-2 3H1l3-5Z" /></Ico></Tool>
          </div>
          <NavBar />
        </div>
        <div className="flex w-[21px] flex-col items-center justify-between bg-[#ededed] py-0.5">
          <ScrollArrow dir="up" />
          <div className="flex size-[19px] items-center justify-center rounded-xs border border-[#8e8e8e] bg-[#e6e6e6]"><Grip /></div>
          <ScrollArrow dir="down" />
        </div>
      </div>
      <div className="flex h-[21px] shrink-0 items-center">
        <button type="button" className="w-[90px] pl-[27px] text-left text-[13px]/5 text-black">1 : 100</button>
        <div className="flex">
          {ViewIcons.map(([label, icon]) => <Tool key={label} label={label} className="h-5 w-[25px]">{icon}</Tool>)}
        </div>
        <div className="flex h-5 flex-1 items-center justify-between bg-[#ebebeb]">
          <ScrollArrow dir="left" />
          <div className="flex size-[19px] items-center justify-center rounded-xs border border-[#8e8e8e] bg-[#e3e3e3]"><Grip flat /></div>
          <ScrollArrow dir="right" />
        </div>
        <div className="flex w-[21px] justify-center self-end"><ResizeGrip /></div>
      </div>
    </main>
  );
}

function StatusBar() {
  return (
    <footer className="flex h-6 shrink-0 items-center border-y border-[#7a7a7a] bg-linear-to-b from-[#dcdcdc] to-[#bababa] text-sm/5">
      <p className="w-[485px] overflow-hidden pt-0.5 pl-px whitespace-nowrap text-black">Zur Auswahl klicken, TABULATOR für andere Auswahl, STRG zum Hinzufügen</p>
      <Tool label="Bearbeitungsbereiche" className="h-full w-[31px]">
        <Ico w={17} h={17}><path d="M1 8l3-2h4v7l-3 2H1Z" fill={LB} stroke={B} /><path d="M4 5q1-4 4-4 4 0 5 3" stroke="#2a7d2a" strokeWidth="2" /><path d="M10 6v9h2V6M15 6v9" strokeWidth="1.200" /></Ico>
      </Tool>
      <div className="relative flex h-full w-[205px]">
        <select aria-label="Aktiver Bearbeitungsbereich" className="w-full appearance-none bg-white"><option></option></select>
        <span className="pointer-events-none absolute top-3 right-1"><Caret big c="#666" /></span>
      </div>
      <button type="button" className="ml-1 flex h-full w-[52px] items-center gap-1.5 bg-[#cfcfcf] pl-1 text-[13px]/5 text-black">
        <Ico w={15} h={16} c="#8a8a8a"><path d="M5 1h9v5H8l-3 4Z" fill="#bbb" /><path d="M1 15 5 10l3 5Z" fill="#8a8a8a" /></Ico>:0
      </button>
      <Tool label="Entwurfsoptionen" className="ml-1 h-full w-[25px]"><Ico w={16} h={16} sw={1}><rect x=".5" y=".5" width="15" height="15" fill="#fff" /><path d="M1 3h14" strokeWidth="2" /><path d="M3 6.500h3M7 8.500h6M7 10.500h6M7 13.500h6M4.500 7v6.500H6" /></Ico></Tool>
      <Tool label="Zu Satz hinzufügen" className="h-full w-[27px]"><Ico w={16} h={16} c="#888"><rect x="2" y="1" width="13" height="14" fill="#b5b5b5" stroke="none" /><path d="M0 12h9M6 8l4 4-4 4" stroke="#fff" strokeWidth="2" /><path d="M15 1v14H1" /></Ico></Tool>
      <div className="relative flex h-full w-[156px]">
        <select aria-label="Entwurfsoption" disabled className="w-full appearance-none bg-white pt-1 pl-[3px] text-[#8a8a8a] opacity-100"><option>Basisvorlage</option></select>
        <span className="pointer-events-none absolute top-3 right-1"><Caret big c="#666" /></span>
      </div>
      <div className="ml-auto flex h-full items-center gap-px">
        <Tool label="Verknüpfungen auswählen" className="h-full w-6 bg-[#cfcfcf]"><Ico w={18} h={16}><rect x="1" y="2" width="8" height="4" rx="2" stroke="#e39b12" strokeWidth="2" /><rect x="8" y="2" width="8" height="4" rx="2" stroke="#e39b12" strokeWidth="2" /><path d="M7 5v9l2-2 2 4 1-1-1-4h3Z" fill="#fff" strokeWidth="1" /></Ico></Tool>
        <Tool label="Unterlagen auswählen" className="ml-0.5 h-full w-6 bg-[#cfcfcf]"><Ico w={18} h={16} c={B}><path d="M6 4 9 1h8l-3 3ZM1 12 7 5h9l-6 7Z" fill="#dcecf8" /><path d="M9 5v9l2-2 2 4 1-1-1-4h3Z" fill="#fff" stroke={D} strokeWidth="1" /></Ico></Tool>
        <div className="self-end pl-3"><ResizeGrip /></div>
      </div>
    </footer>
  );
}

export default function App() {
  const [tab, setTab] = useState(null);
  return (
    <div className="relative flex h-screen flex-col overflow-hidden rounded-lg border border-[#5b5b5b] bg-[#f6fafc] px-1.5 pb-[7px] font-['Open_Sans','Noto_Sans',sans-serif]">
      <svg className="absolute inset-x-0 top-0 h-10 w-full blur-xs" aria-hidden="true">
        <g fill="#b5d6f0">
          <rect x="185" y="1" width="65" height="6" /><rect x="335" y="1" width="120" height="5" /><rect x="590" y="2" width="46" height="6" /><rect x="660" y="2" width="70" height="5" />
          <rect x="555" y="30" width="55" height="7" /><rect x="640" y="30" width="80" height="6" /><rect x="786" y="2" width="95" height="7" /><rect x="786" y="30" width="125" height="6" />
          <rect x="960" y="30" width="120" height="6" /><rect x="1120" y="10" width="90" height="7" /><rect x="1115" y="30" width="40" height="6" /><rect x="1252" y="2" width="40" height="6" /><rect x="1250" y="30" width="42" height="7" />
        </g>
        <g fill="#7fa6cc"><rect x="760" y="0" width="14" height="10" /><rect x="760" y="24" width="14" height="12" /><rect x="1226" y="2" width="12" height="8" /></g>
        <rect x="932" y="24" width="16" height="13" fill="#b3b078" />
      </svg>
      <TitleBar />
      <div className="relative flex min-h-0 flex-1 flex-col border-x border-[#8a8a8a]">
        <nav className="flex h-[25px] shrink-0 items-center gap-6 border-t border-[#777] bg-[#9d9d9d] pt-1 pl-[68px] text-sm/5 whitespace-nowrap text-[#1c1c1c]">
          {TABS.map(t => (
            <button key={t} type="button" aria-pressed={tab === t} onClick={() => setTab(t)}>{t}</button>
          ))}
          <span className="flex items-center gap-3">
            <Ico w={12} h={10}><path d="M0 0l6 5-6 5ZM6 0l6 5-6 5Z" fill="#fff" stroke="none" /></Ico>
            <span className="flex items-center gap-1.5">
              <Tool label="Multifunktionsleiste minimieren"><Ico w={19} h={12}><rect x="1" y="1" width="17" height="10" rx="2" fill="#f0f0f0" /><path d="M6 8l3.500-4L13 8Z" fill="#333" stroke="none" /></Ico></Tool>
              <Caret c="#111" />
            </span>
          </span>
        </nav>
        <Ribbon />
        <p className="flex h-[33px] shrink-0 items-center bg-[#d8e3d0] pt-1 pl-[11px] text-sm/5 text-black">Ändern | Räume</p>
        <div className="flex min-h-0 flex-1 bg-[#f0f0f0]">
          <aside className="mr-1 flex w-[439px] shrink-0 flex-col">
            <Properties />
            <ProjectBrowser />
          </aside>
          <DrawingView />
        </div>
        <StatusBar />
      </div>
    </div>
  );
}
